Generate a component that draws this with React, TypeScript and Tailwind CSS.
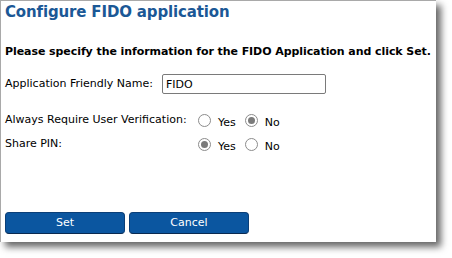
import React from 'react';

function Radio({ checked }: { checked?: boolean }) {
  return (
    <span className="flex h-[13px] w-[13px] shrink-0 items-center justify-center rounded-full border border-[#8c8c8c] bg-white">
      {checked && <span className="h-[7px] w-[7px] rounded-full bg-[#7b7b7b]" />}
    </span>
  );
}

function RadioPair({ yes }: { yes: boolean }) {
  return (
    <div className="flex items-center">
      <Radio checked={yes} />
      <span className="ml-[7px] pt-[6px]">Yes</span>
      <span className="ml-[9px]">
        <Radio checked={!yes} />
      </span>
      <span className="ml-[7px] pt-[6px]">No</span>
    </div>
  );
}

export default function App() {
  return (
    <div className="h-[258px] w-[452px] bg-white font-['DejaVu_Sans','Verdana',sans-serif] text-[11px] leading-[14px] text-black">
      <div className="flex h-[242px] w-[436px] flex-col border-l border-t border-[#a9a9a9] bg-white pl-[4px] shadow-[5px_5px_7px_rgba(0,0,0,0.6)]">
        <h1 className="mt-[2px] text-[15px] font-bold leading-[18px] tracking-[-0.15px] text-[#1b5896]">
          Configure FIDO application
        </h1>

        <p className="mt-[24px] font-bold tracking-[-0.07px]">
          Please specify the information for the FIDO Application and click Set.
        </p>

        <div className="mt-[15px] flex h-[20px] items-center">
          <span className="w-[157px]">Application Friendly Name:</span>
          <input
            type="text"
            defaultValue="FIDO"
            className="h-[20px] w-[164px] rounded-[2px] border border-[#7a7a7a] px-[3px] text-[11px] outline-none"
          />
        </div>

        <div className="mt-[19px] flex h-[14px] items-center">
          <span className="w-[193px]">Always Require User Verification:</span>
          <RadioPair yes={false} />
        </div>

        <div className="mt-[10px] flex h-[14px] items-center">
          <span className="w-[193px]">Share PIN:</span>
          <RadioPair yes={true} />
        </div>

        <div className="mt-[61px] flex gap-[4px]">
          <button className="h-[22px] w-[120px] rounded-[4px] border border-[#0b3f78] border-b-[#0a2a50] bg-[#0b56a0] text-white">
            Set
          </button>
          <button className="h-[22px] w-[120px] rounded-[4px] border border-[#0b3f78] border-b-[#0a2a50] bg-[#0b56a0] text-white">
            Cancel
          </button>
        </div>
      </div>
    </div>
  );
}
